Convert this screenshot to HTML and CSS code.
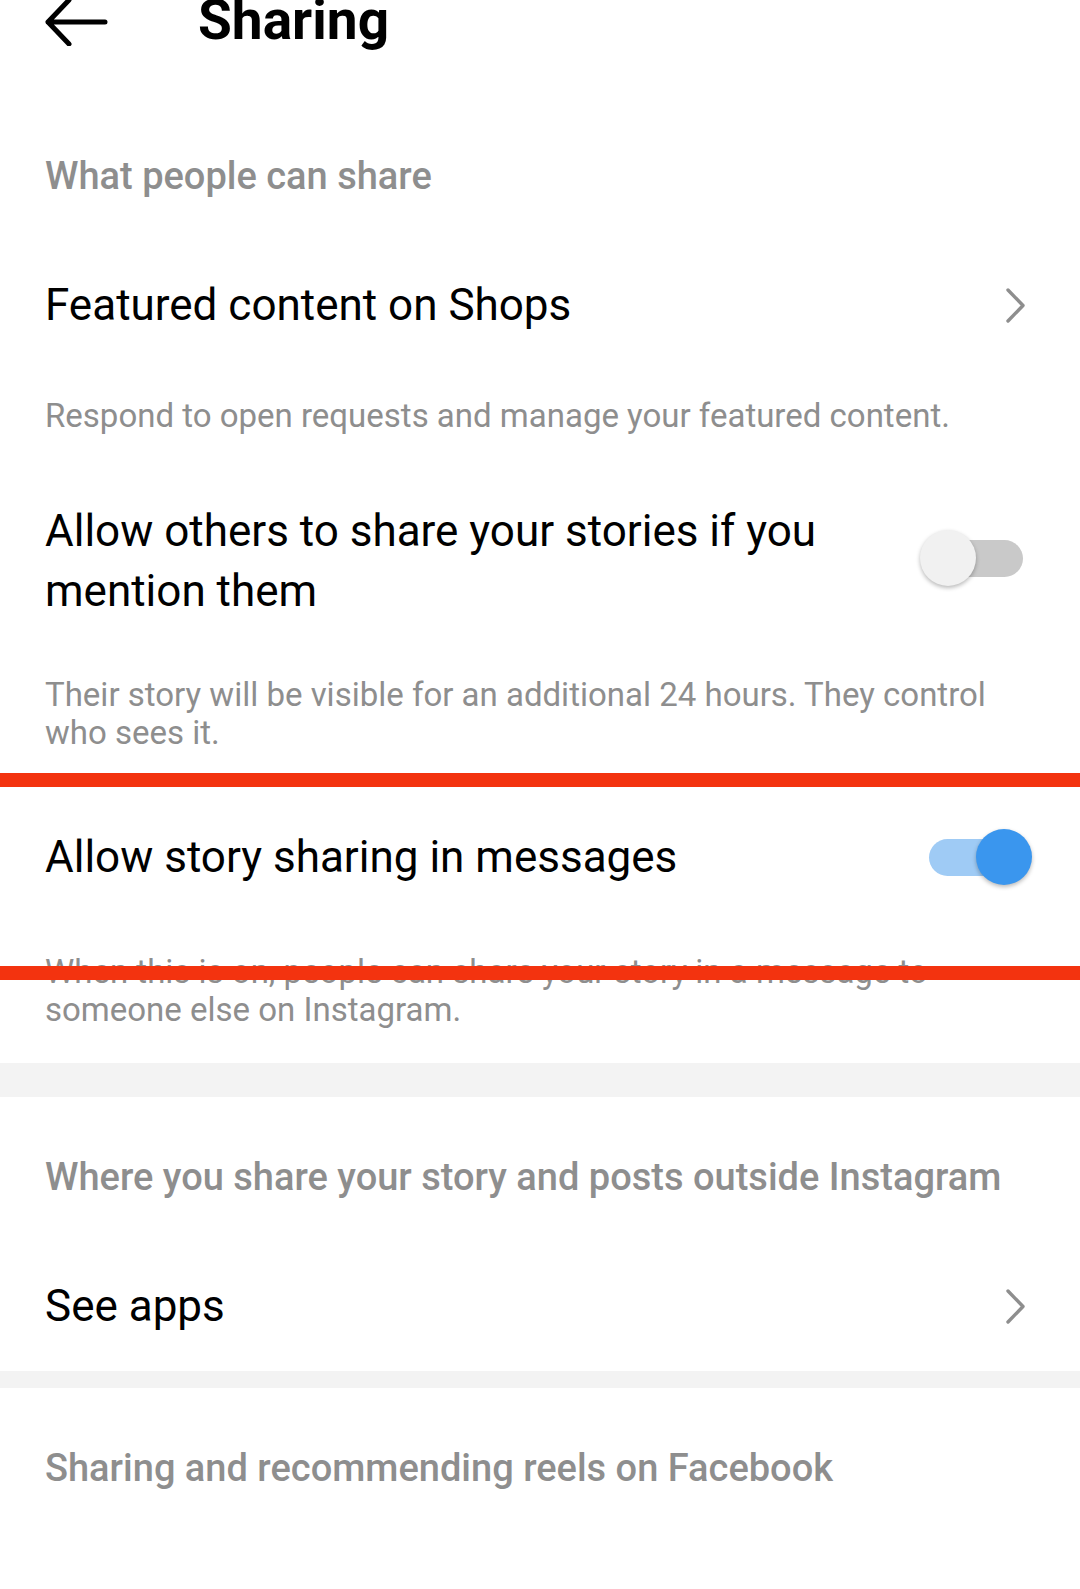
FILE: index.html
```html
<!DOCTYPE html>
<html lang="en">
<head>
  <meta charset="UTF-8">
  <title>Sharing</title>
  <link rel="stylesheet" href="styles.css">
</head>
<body>

<main class="settings">
  <div class="topbar">
    <svg class="back" width="64" height="48" viewBox="0 0 64 48">
      <path d="M60 24 H3 M24 2 L3 24 L24 46" fill="none" stroke="#000" stroke-width="5" stroke-linecap="round" stroke-linejoin="round"/>
    </svg>
    <h1 class="title">Sharing</h1>
  </div>

  <h3 class="section-title first">What people can share</h3>

  <div class="row">
    <span class="row-label">Featured content on Shops</span>
    <span class="row-trail">
      <svg class="chevron" width="21" height="37" viewBox="0 0 21 37">
        <path d="M3 3 L18 18.5 L3 34" fill="none" stroke="#8e8e8e" stroke-width="3.4" stroke-linecap="round" stroke-linejoin="round"/>
      </svg>
    </span>
  </div>
  <p class="row-hint hint-short">Respond to open requests and manage your featured content.</p>

  <div class="row row-tall">
    <span class="row-label">Allow others to share your stories if you mention them</span>
    <span class="switch switch-raised"><span class="track"></span><span class="thumb"></span></span>
  </div>
  <p class="row-hint hint-mid">Their story will be visible for an additional 24 hours. They control who sees it.</p>

  <div class="row row-after-hint">
    <span class="row-label">Allow story sharing in messages</span>
    <span class="switch on"><span class="track"></span><span class="thumb"></span></span>
  </div>
  <p class="row-hint">When this is on, people can share your story in a message to someone else on Instagram.</p>

  <div class="divider"></div>

  <h3 class="section-title">Where you share your story and posts outside Instagram</h3>

  <div class="row">
    <span class="row-label">See apps</span>
    <span class="row-trail">
      <svg class="chevron" width="21" height="37" viewBox="0 0 21 37">
        <path d="M3 3 L18 18.5 L3 34" fill="none" stroke="#8e8e8e" stroke-width="3.4" stroke-linecap="round" stroke-linejoin="round"/>
      </svg>
    </span>
  </div>

  <div class="divider thin"></div>

  <h3 class="section-title">Sharing and recommending reels on Facebook</h3>
</main>

<div class="markup markup-top"></div>
<div class="markup markup-bottom"></div>

</body>
</html>
```

FILE: styles.css
```css
body {
  margin: 0;
  position: relative;
  min-height: 1589px;
  background: #fff;
  font-family: Roboto, "Noto Sans", Arial, sans-serif;
  color: #000;
  overflow: hidden;
}
.settings {
  padding: 0 45px;
}
.topbar {
  display: flex;
  align-items: flex-start;
  height: 56px;
  margin-top: -8px;
}
.back {
  margin-top: 6px;
  flex: none;
}
.title {
  margin: 1px 0 0 89px;
  font-size: 55px;
  line-height: 54px;
  font-weight: 700;
}
.section-title {
  margin: 58px 0 0;
  font-size: 38px;
  line-height: 44px;
  font-weight: 500;
  color: #8e8e8e;
}
.section-title.first {
  margin-top: 106px;
}
.row {
  display: flex;
  align-items: center;
  justify-content: space-between;
  margin-top: 77px;
}
.row-tall {
  margin-top: 66px;
}
.row-after-hint {
  margin-top: 75px;
}
.row-label {
  flex: 1;
  max-width: 838px;
  font-size: 44px;
  line-height: 60px;
}
.row-trail {
  display: flex;
  justify-content: flex-end;
  width: 100px;
}
.chevron {
  margin-right: 9px;
}
.row-hint {
  margin: 66px 0 0;
  font-size: 33px;
  line-height: 38px;
  color: #8e8e8e;
}
.hint-short {
  margin-top: 62px;
}
.hint-mid {
  margin-top: 55px;
}
.switch {
  position: relative;
  flex: none;
  width: 112px;
  height: 56px;
  margin-right: 3px;
}
.switch-raised {
  margin-bottom: 7px;
}
.switch .track {
  position: absolute;
  left: 9px;
  right: 9px;
  top: 10px;
  height: 37px;
  border-radius: 19px;
  background: #c9c9c9;
}
.switch .thumb {
  position: absolute;
  left: 0;
  top: 0;
  width: 56px;
  height: 56px;
  border-radius: 50%;
  background: #f1f1f1;
  box-shadow: 0 2px 4px rgba(0, 0, 0, 0.28);
}
.switch.on .track {
  background: #9fcbf5;
}
.switch.on .thumb {
  left: auto;
  right: 0;
  background: #3a96ee;
}
.divider {
  height: 34px;
  margin: 34px -45px 0;
  background: #f3f3f3;
}
.divider.thin {
  height: 17px;
  margin-top: 35px;
}
.markup {
  position: absolute;
  left: 0;
  right: 0;
  height: 14px;
  background: #f3330f;
}
.markup-top {
  top: 773px;
}
.markup-bottom {
  top: 966px;
}
```
